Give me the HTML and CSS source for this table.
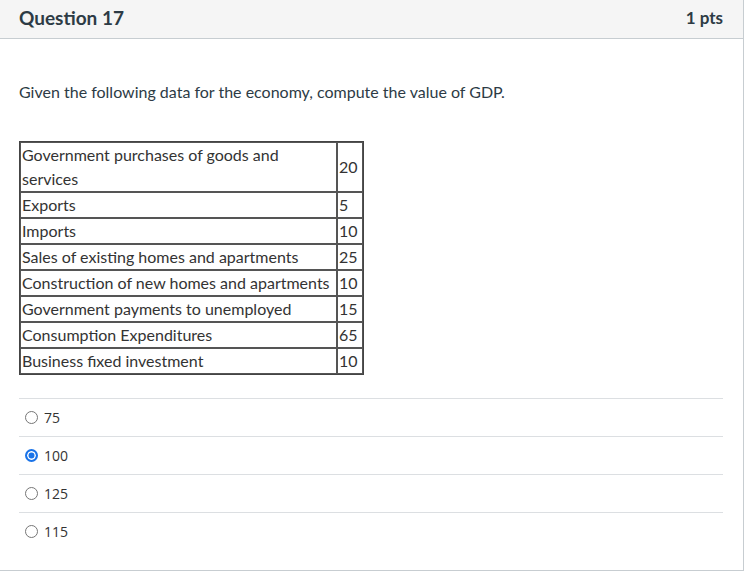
FILE: index.html
```html
<!DOCTYPE html>
<html>
<head>
<meta charset="utf-8">
<link rel="stylesheet" href="styles.css">
</head>
<body>
<div class="quiz">
  <div class="quiz-header">
    <h2 class="quiz-title">Question 17</h2>
    <span class="quiz-points">1 pts</span>
  </div>
  <div class="quiz-body">
    <p class="question-text">Given the following data for the economy, compute the value of GDP.</p>
    <table class="data-table">
      <colgroup><col class="col-label"><col class="col-value"></colgroup>
      <tr><td>Government purchases of goods and services</td><td>20</td></tr>
      <tr><td>Exports</td><td>5</td></tr>
      <tr><td>Imports</td><td>10</td></tr>
      <tr><td>Sales of existing homes and apartments</td><td>25</td></tr>
      <tr><td>Construction of new homes and apartments</td><td>10</td></tr>
      <tr><td>Government payments to unemployed</td><td>15</td></tr>
      <tr><td>Consumption Expenditures</td><td>65</td></tr>
      <tr><td>Business fixed investment</td><td>10</td></tr>
    </table>
    <div class="answers">
      <label class="answer"><span class="radio"></span><span class="answer-text">75</span></label>
      <label class="answer"><span class="radio radio-checked"></span><span class="answer-text">100</span></label>
      <label class="answer"><span class="radio"></span><span class="answer-text">125</span></label>
      <label class="answer"><span class="radio"></span><span class="answer-text">115</span></label>
    </div>
  </div>
</div>
</body>
</html>
```

FILE: styles.css
```css
* { box-sizing: border-box; }
html, body { margin: 0; padding: 0; background: #fff; }
body { font-family: Lato, "Open Sans", sans-serif; color: #2d3b45; }

.quiz {
  width: 745px;
  margin-left: -1px;
  border: 1px solid #c7cdd1;
  border-top: none;
  height: 571px;
}
.quiz-header {
  height: 39px;
  background: #f5f5f5;
  border-bottom: 1px solid #c7cdd1;
  display: flex;
  align-items: center;
  justify-content: space-between;
  padding: 0 20px 4px 19px;
}
.quiz-title {
  margin: 0;
  font-size: 19px;
  font-weight: 700;
  color: #2d3b45;
}
.quiz-points {
  font-size: 17px;
  font-weight: 700;
  color: #2d3b45;
}
.quiz-body {
  padding: 0 20px 20px 19px;
}
.question-text {
  margin: 41px 0 37px 0;
  font-size: 16px;
  line-height: 24px;
  color: #2d3b45;
}
.data-table {
  table-layout: fixed;
  width: 345px;
  border-collapse: separate;
  border-spacing: 0;
  border: 1px solid #444;
  margin-bottom: 23px;
  color: #333;
  font-size: 16px;
  line-height: 24px;
}
.col-label { width: 317px; }
.col-value { width: 26px; }
.data-table td {
  border: 1px solid #555;
  padding: 0 0 0 1px;
  vertical-align: middle;
}
.answers { display: flex; flex-direction: column; }
.answer {
  display: flex;
  align-items: center;
  height: 38px;
  border-top: 1px solid #dcdfe2;
  padding-left: 6px;
  padding-bottom: 1px;
  font-family: "Open Sans", Lato, sans-serif;
  font-size: 14px;
  color: #333;
}
.radio {
  width: 13px;
  height: 13px;
  border: 1px solid #767676;
  border-radius: 50%;
  margin-right: 6px;
  flex: none;
  background: #fff;
}
.radio-checked {
  border: 2px solid #1a73e8;
  background: #1a73e8;
  box-shadow: inset 0 0 0 1.5px #fff;
}
```
